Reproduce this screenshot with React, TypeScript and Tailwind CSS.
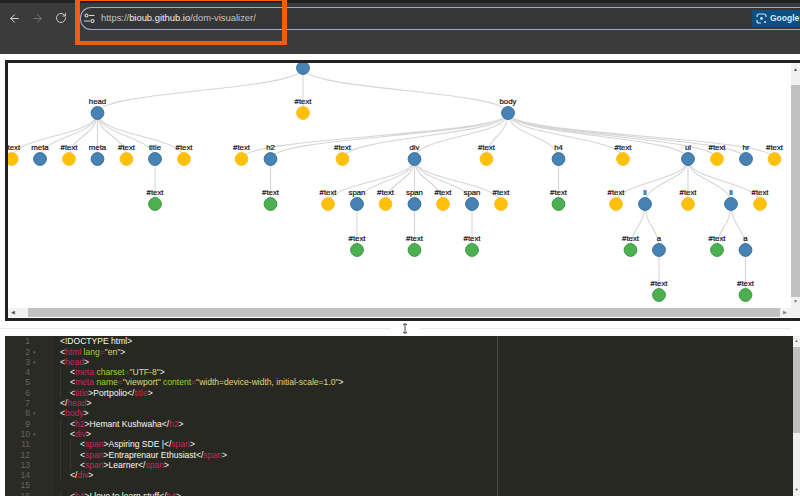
import { ArrowLeft, ArrowRight, RotateCw } from 'lucide-react'

type Kind = 'el' | 'ws' | 'leaf'

interface TreeNode {
  label: string
  x: number
  kind: Kind
  children?: TreeNode[]
}

const ws = (x: number): TreeNode => ({ label: '#text', x, kind: 'ws' })
const leaf = (x: number): TreeNode => ({ label: '#text', x, kind: 'leaf' })
const el = (label: string, x: number, children?: TreeNode[]): TreeNode => ({ label, x, kind: 'el', children })

const tree: TreeNode = el('html', 303, [
  el('head', 97.5, [
    ws(11.7),
    el('meta', 40),
    ws(69),
    el('meta', 97.5),
    ws(126.5),
    el('title', 155, [leaf(155)]),
    ws(184),
  ]),
  ws(303),
  el('body', 508, [
    ws(241.5),
    el('h2', 270.5, [leaf(270.5)]),
    ws(342.5),
    el('div', 414.5, [
      ws(328),
      el('span', 357, [leaf(357)]),
      ws(385.5),
      el('span', 414.5, [leaf(414.5)]),
      ws(443),
      el('span', 472, [leaf(472)]),
      ws(501),
    ]),
    ws(486.5),
    el('h4', 558.5, [leaf(558.5)]),
    ws(623),
    el('ul', 688, [
      ws(616),
      el('li', 645, [leaf(630.5), el('a', 659, [leaf(659)])]),
      ws(688),
      el('li', 731, [leaf(717), el('a', 745.5, [leaf(745.5)])]),
      ws(760),
    ]),
    ws(717),
    el('hr', 746),
    ws(774.5),
  ]),
])

const levelY = [68, 113, 159, 204, 250, 295]

const fills: Record<Kind, string> = {
  el: 'fill-[#4682b4] stroke-[#3b6f9c]',
  ws: 'fill-[#ffc107] stroke-[#fbc02d]',
  leaf: 'fill-[#4caf50] stroke-[#3f9a45]',
}

function Links({ node, depth }: { node: TreeNode; depth: number }) {
  const y = levelY[depth]
  return (
    <>
      {node.children?.map((c, i) => {
        const ty = levelY[depth + 1]
        const my = (y + ty) / 2
        return (
          <g key={i}>
            <path
              d={`M${node.x},${y}C${node.x},${my} ${c.x},${my} ${c.x},${ty}`}
              className="fill-none stroke-[#d6d6d6]"
              strokeWidth={1.1}
            />
            <Links node={c} depth={depth + 1} />
          </g>
        )
      })}
    </>
  )
}

function Nodes({ node, depth }: { node: TreeNode; depth: number }) {
  const y = levelY[depth]
  return (
    <>
      <circle cx={node.x} cy={y} r={6.4} strokeWidth={1} className={fills[node.kind]} />
      {depth > 0 && (
        <text
          x={node.x}
          y={y - 9.5}
          textAnchor="middle"
          className="fill-[#111] stroke-[#111] font-['Liberation_Sans',sans-serif] text-[7.8px]"
          strokeWidth={0.2}
        >
          {node.label}
        </text>
      )}
      {node.children?.map((c, i) => <Nodes key={i} node={c} depth={depth + 1} />)}
    </>
  )
}

function TuneIcon() {
  return (
    <svg width="11" height="11" viewBox="0 0 11 11" fill="none" stroke="#d8d8d8" strokeWidth="1.1">
      <circle cx="2.5" cy="2.5" r="1.5" />
      <path d="M5 2.5h5.5M0 8h6" />
      <circle cx="8.5" cy="8" r="1.5" />
    </svg>
  )
}

function LensIcon() {
  return (
    <svg width="11" height="11" viewBox="0 0 11 11" fill="none" stroke="#cfe4f5" strokeWidth="1.2">
      <path d="M1 4V3a2 2 0 0 1 2-2h5a2 2 0 0 1 2 2v1M1 7v1a2 2 0 0 0 2 2h2" />
      <circle cx="5.5" cy="5.5" r="1.4" fill="#cfe4f5" stroke="none" />
      <circle cx="9" cy="9" r="1" fill="#cfe4f5" stroke="none" />
    </svg>
  )
}

const T = ({ c }: { c: string }) => <span className="text-[#c8265f]">{c}</span>
const A = ({ c }: { c: string }) => <span className="text-[#9bd42c]">{c}</span>
const S = ({ c }: { c: string }) => <span className="text-[#e0d672]">{c}</span>

const lines: { indent: number; fold?: boolean; code: React.ReactNode }[] = [
  { indent: 0, code: <>&lt;!DOCTYPE html&gt;</> },
  { indent: 0, fold: true, code: <>&lt;<T c="html" /> <A c="lang" /><T c="=" /><S c={'"en"'} />&gt;</> },
  { indent: 0, fold: true, code: <>&lt;<T c="head" />&gt;</> },
  { indent: 1, code: <>&lt;<T c="meta" /> <A c="charset" /><T c="=" /><S c={'"UTF-8"'} />&gt;</> },
  { indent: 1, code: <>&lt;<T c="meta" /> <A c="name" /><T c="=" /><S c={'"viewport"'} /> <A c="content" /><T c="=" /><S c={'"width=device-width, initial-scale=1.0"'} />&gt;</> },
  { indent: 1, code: <>&lt;<T c="title" />&gt;Portpolio&lt;/<T c="title" />&gt;</> },
  { indent: 0, code: <>&lt;/<T c="head" />&gt;</> },
  { indent: 0, fold: true, code: <>&lt;<T c="body" />&gt;</> },
  { indent: 1, code: <>&lt;<T c="h2" />&gt;Hemant Kushwaha&lt;/<T c="h2" />&gt;</> },
  { indent: 1, fold: true, code: <>&lt;<T c="div" />&gt;</> },
  { indent: 2, code: <>&lt;<T c="span" />&gt;Aspiring SDE |&lt;/<T c="span" />&gt;</> },
  { indent: 2, code: <>&lt;<T c="span" />&gt;Entraprenaur Ethusiast&lt;/<T c="span" />&gt;</> },
  { indent: 2, code: <>&lt;<T c="span" />&gt;Learner&lt;/<T c="span" />&gt;</> },
  { indent: 1, code: <>&lt;/<T c="div" />&gt;</> },
  { indent: 0, code: <></> },
  { indent: 1, code: <>&lt;<T c="h4" />&gt;I love to learn stuff&lt;/<T c="h4" />&gt;</> },
]

export default function App() {
  return (
    <div className="relative flex h-[496px] w-[800px] flex-col overflow-hidden bg-white font-['Liberation_Sans',sans-serif]">
      {/* browser chrome */}
      <div className="h-[54px] shrink-0 bg-[#3b3b3b]">
        <div className="h-[3px] bg-[#222]" />
        <div className="flex items-center pt-[3.5px]">
          <div className="flex w-[80px] items-center pl-[8px] text-[#d8d8d8]">
            <ArrowLeft size={13} strokeWidth={1.8} />
            <ArrowRight size={13} strokeWidth={1.8} className="ml-[10px] text-[#777]" />
            <RotateCw size={12} strokeWidth={1.8} className="ml-[11px]" />
          </div>
          <div className="flex h-[23px] flex-1 items-center rounded-l-[11px] border-y border-l border-[#a3a9d6] bg-[#363636] pl-[3px]">
            <TuneIcon />
            <span className="ml-[6px] text-[9.4px] text-[#c4c4c4]">
              https://<span className="text-[#efefef]">bioub.github.io</span>/dom-visualizer/
            </span>
            <span className="ml-auto flex h-[17px] w-[48px] items-center gap-[3px] bg-[#0d4f80] pl-[4px] text-[8.5px] font-bold text-[#d6e8f7]">
              <LensIcon />
              Google
            </span>
          </div>
        </div>
      </div>

      {/* tree panel */}
      <div className="mt-[6px] ml-[5px] flex h-[261px] shrink-0 flex-col border-y-[3px] border-l-[3px] border-[#222]">
        <div className="flex min-h-0 flex-1">
          <svg viewBox="8 63 783 245" className="h-[245px] w-[783px] bg-white">
            <Links node={tree} depth={0} />
            <Nodes node={tree} depth={0} />
          </svg>
          <div className="flex w-[9px] flex-col bg-[#f1f1f1]">
            <div className="flex h-[22px] justify-center pt-[3px] text-[5px] leading-[6px] text-[#555]">▲</div>
            <div className="h-[212px] bg-[#c1c1c1]" />
            <div className="flex flex-1 justify-center pt-[1px] text-[5px] leading-[6px] text-[#777]">▼</div>
          </div>
        </div>
        <div className="mb-[1px] flex h-[9px] shrink-0 bg-[#f1f1f1] pr-[9px]">
          <div className="flex w-[20px] items-center pl-[3px] text-[5px] text-[#555]">◀</div>
          <div className="flex-1 bg-[#c1c1c1]" />
          <div className="flex w-[11px] items-center pl-[3px] text-[5px] text-[#888]">▶</div>
        </div>
      </div>

      {/* resize handle */}
      <div className="flex h-[15px] shrink-0 items-center pr-[10px]">
        <div className="h-px w-[390px] bg-[#e9e9e9]" />
        <svg width="30" height="11" viewBox="0 0 30 11" fill="none" stroke="#444" strokeWidth="1">
          <path d="M15 1v9M13 2l2-1.5L17 2M13 9l2 1.5L17 9" />
        </svg>
        <div className="h-px flex-1 bg-[#e9e9e9]" />
      </div>

      {/* code editor */}
      <div className="relative ml-[5px] flex min-h-0 flex-1 overflow-hidden bg-[#272822] pt-[0.3px] text-[8.55px] text-[#f8f8f2]">
        <div className="w-[50px] shrink-0 bg-[#2a2b25]">
          {lines.map((l, i) => (
            <div key={i} className="flex h-[10.3px] items-center leading-[10.3px] text-[#64655d]">
              <span className="w-[25px] text-right">{i + 1}</span>
              {l.fold && <span className="ml-[3px] text-[5px] text-[#64655d]">▾</span>}
            </div>
          ))}
        </div>
        <div className="min-w-0 flex-1 pl-[5px]">
          {lines.map((l, i) => (
            <div key={i} className="flex h-[10.3px] leading-[10.3px] whitespace-pre">
              {Array.from({ length: l.indent }).map((_, k) => (
                <span key={k} className="h-full w-[10px] border-l border-[#35362f]" />
              ))}
              <span>{l.code}</span>
            </div>
          ))}
        </div>
        <div className="absolute top-0 bottom-0 left-[492px] w-px bg-[#4a4b45]" />
        <div className="flex w-[7px] shrink-0 flex-col bg-[#f1f1f1]">
          <div className="h-[11px] pt-[2px] text-center text-[4px] leading-[5px] text-[#666]">▲</div>
          <div className="h-[86px] bg-[#c1c1c1]" />
          <div className="mt-auto h-[9px] text-center text-[4px] leading-[5px] text-[#444]">▼</div>
        </div>
      </div>

      {/* highlight drawn over the address bar */}
      <div className="absolute top-0 left-[75px] h-[45px] w-[212px] border-x-[5px] border-t-[1px] border-b-[4px] border-[#ed5f0b]" />
    </div>
  )
}
